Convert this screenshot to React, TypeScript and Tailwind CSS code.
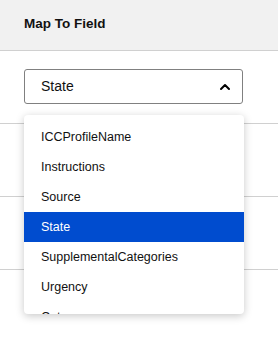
import { ChevronUp } from 'lucide-react';

const options = [
  'ICCProfileName',
  'Instructions',
  'Source',
  'State',
  'SupplementalCategories',
  'Urgency',
  'Category',
];

export default function App() {
  const selected = 'State';
  return (
    <div className="relative w-[278px] h-[343px] bg-white overflow-hidden" style={{ fontFamily: '"Liberation Sans", Arial, sans-serif' }}>
      <div className="h-[51px] bg-[#f1f1f1] border-b border-[#d0d0d0] px-6 flex items-center">
        <span className="text-[13.5px] font-bold text-[#111] -mt-[2px]">Map To Field</span>
      </div>
      <div className="h-[73px] border-b border-[#d0d0d0] px-6 pt-[18px]">
        <div className="relative w-[219px] h-[35px] border border-[#808080] rounded-[3px] flex items-center justify-between pl-4 pr-[9px]">
          <span className="text-[14px] text-[#111]">{selected}</span>
          <ChevronUp className="w-4 h-4 text-black" strokeWidth={3} />
        </div>
      </div>
      <div className="h-[73px] border-b border-[#d0d0d0]" />
      <div className="h-[73px] border-b border-[#d0d0d0]" />

      {/* open listbox */}
      <div className="absolute left-6 top-[115px] w-[220px] h-[199px] bg-white rounded-[4px] shadow-[0_2px_8px_rgba(0,0,0,0.22)] overflow-hidden pt-[7px]">
        {options.map((o) => (
          <div
            key={o}
            className={`h-[30px] flex items-center pl-[17px] text-[12.5px] ${
              o === selected ? 'bg-[#004ccf] text-white' : 'text-[#111]'
            }`}
          >
            {o}
          </div>
        ))}
      </div>
    </div>
  );
}
